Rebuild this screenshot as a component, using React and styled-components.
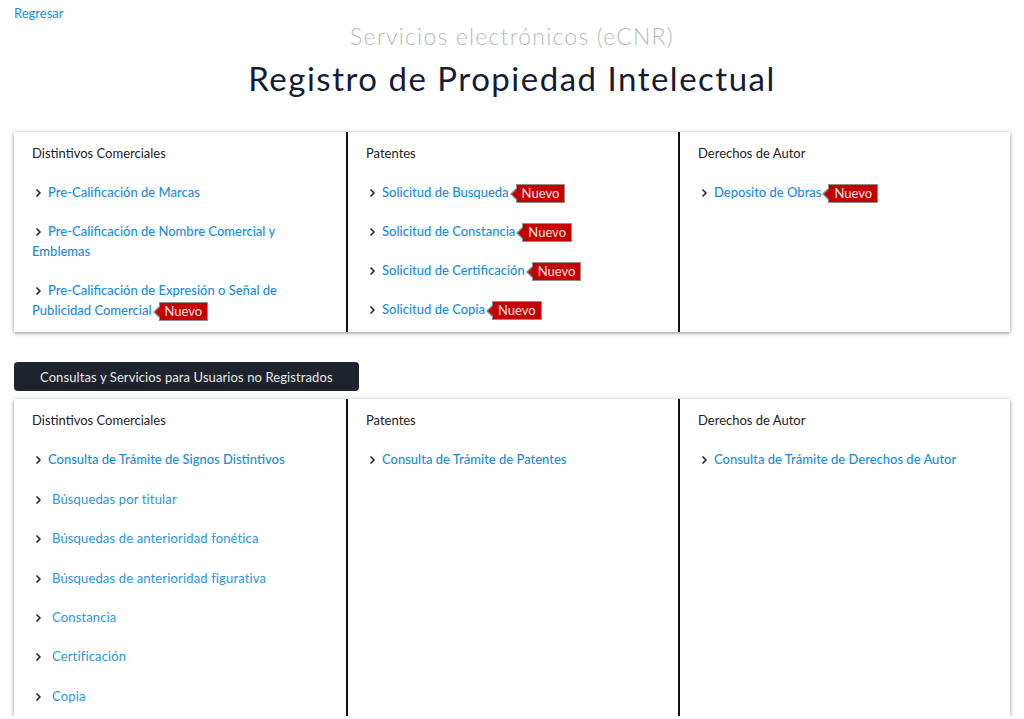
import React from "react";
import styled, { createGlobalStyle } from "styled-components";

const Global = createGlobalStyle`
  html, body { margin: 0; padding: 0; background: #fff; }
  body { font-family: Lato, "Open Sans", sans-serif; }
  * { box-sizing: border-box; }
`;

const Page = styled.div`
  padding: 5px 14px 0 14px;
`;

const Back = styled.a`
  display: block;
  font-size: 13px;
  line-height: 16px;
  color: #1a8ce0;
  text-decoration: none;
`;

const Header = styled.header`
  display: flex;
  flex-direction: column;
  align-items: center;
`;

const Subtitle = styled.h2`
  margin: 2px 0 0 0;
  font-weight: 300;
  font-size: 23px;
  line-height: 26px;
  letter-spacing: 1.2px;
  color: #b9b9b9;
`;

const Title = styled.h1`
  margin: 9px 0 0 0;
  font-weight: 400;
  font-size: 33px;
  line-height: 40px;
  letter-spacing: 1.5px;
  color: #141b35;
`;

const Card = styled.section`
  display: grid;
  grid-template-columns: repeat(3, 1fr);
  margin-top: ${(p) => p.$mt}px;
  background: #fff;
  box-shadow: 0 1px 4px rgba(0, 0, 0, 0.45);
`;

const Column = styled.div`
  padding: 11px 18px ${(p) => p.$pb}px 18px;
  border-left: ${(p) => (p.$first ? "none" : "2px solid #111")};
`;

const ColTitle = styled.div`
  font-size: 13px;
  line-height: 20px;
  color: #222;
`;

const Item = styled.div`
  margin-top: ${(p) => (p.$wide ? 19.4 : 19)}px;
  font-size: 13px;
  line-height: 20px;
  padding-right: 8px;
`;

const Chevron = styled.svg`
  display: inline-block;
  width: 5px;
  height: 8px;
  margin: 0 7px 0 4px;
  vertical-align: 0;
  overflow: visible;
`;

const Link = styled.a`
  color: ${(p) => (p.$sub ? "#2b95e3" : "#1a8ce0")};
  font-weight: ${(p) => (p.$sub ? 400 : 500)};
  letter-spacing: ${(p) => (p.$sub ? "0.15px" : "0")};
  margin-left: ${(p) => (p.$sub ? "4px" : "0")};
  text-decoration: none;
`;

const Badge = styled.span`
  position: relative;
  top: 2px;
  display: inline-block;
  margin-left: 7px;
  padding: 0 5px;
  height: 19px;
  line-height: 17px;
  font-size: 13px;
  color: #fbe5e5;
  background: #c40000;
  border: 1px solid #8e8e8e;
  vertical-align: top;
  &::before {
    content: "";
    position: absolute;
    left: -7px;
    top: 3px;
    border-style: solid;
    border-width: 6px 6px 6px 0;
    border-color: transparent #8e8e8e transparent transparent;
  }
  &::after {
    content: "";
    position: absolute;
    left: -5px;
    top: 4px;
    border-style: solid;
    border-width: 5px 5px 5px 0;
    border-color: transparent #c40000 transparent transparent;
  }
`;

const SectionButton = styled.button`
  display: block;
  margin-top: 30px;
  height: 29px;
  padding: 0 26px;
  border: none;
  border-radius: 4px;
  background: #1e232d;
  color: #e9e9e9;
  font-family: Lato, sans-serif;
  font-size: 13px;
  letter-spacing: 0.1px;
`;

const top = [
  {
    title: "Distintivos Comerciales",
    items: [
      { t: "Pre-Calificación de Marcas" },
      { t: "Pre-Calificación de Nombre Comercial y Emblemas" },
      { t: "Pre-Calificación de Expresión o Señal de Publicidad Comercial", n: true },
    ],
  },
  {
    title: "Patentes",
    items: [
      { t: "Solicitud de Busqueda", n: true },
      { t: "Solicitud de Constancia", n: true },
      { t: "Solicitud de Certificación", n: true },
      { t: "Solicitud de Copia", n: true },
    ],
  },
  {
    title: "Derechos de Autor",
    items: [{ t: "Deposito de Obras", n: true }],
  },
];

const bottom = [
  {
    title: "Distintivos Comerciales",
    items: [
      { t: "Consulta de Trámite de Signos Distintivos" },
      { t: "Búsquedas por titular", s: true },
      { t: "Búsquedas de anterioridad fonética", s: true },
      { t: "Búsquedas de anterioridad figurativa", s: true },
      { t: "Constancia", s: true },
      { t: "Certificación", s: true },
      { t: "Copia", s: true },
    ],
  },
  {
    title: "Patentes",
    items: [{ t: "Consulta de Trámite de Patentes" }],
  },
  {
    title: "Derechos de Autor",
    items: [{ t: "Consulta de Trámite de Derechos de Autor" }],
  },
];

function Arrow() {
  return (
    <Chevron viewBox="0 0 5 8" aria-hidden="true">
      <path d="M1 1 L4 4 L1 7" fill="none" stroke="#2a2a2a" strokeWidth="1.7" strokeLinecap="round" strokeLinejoin="round" />
    </Chevron>
  );
}

function Block({ cols, mt, wide, pb }) {
  return (
    <Card $mt={mt}>
      {cols.map((c, i) => (
        <Column key={c.title} $first={i === 0} $pb={pb}>
          <ColTitle>{c.title}</ColTitle>
          {c.items.map((it) => (
            <Item key={it.t} $wide={wide}>
              <Arrow />
              <Link href="#" $sub={it.s}>{it.t}</Link>
              {it.n && <Badge>Nuevo</Badge>}
            </Item>
          ))}
        </Column>
      ))}
    </Card>
  );
}

export default function App() {
  return (
    <Page>
      <Global />
      <Back href="#">Regresar</Back>
      <Header>
        <Subtitle>Servicios electrónicos (eCNR)</Subtitle>
        <Title>Registro de Propiedad Intelectual</Title>
      </Header>
      <Block cols={top} mt={34} pb={12} />
      <SectionButton>Consultas y Servicios para Usuarios no Registrados</SectionButton>
      <Block cols={bottom} mt={8} pb={10} wide />
    </Page>
  );
}
